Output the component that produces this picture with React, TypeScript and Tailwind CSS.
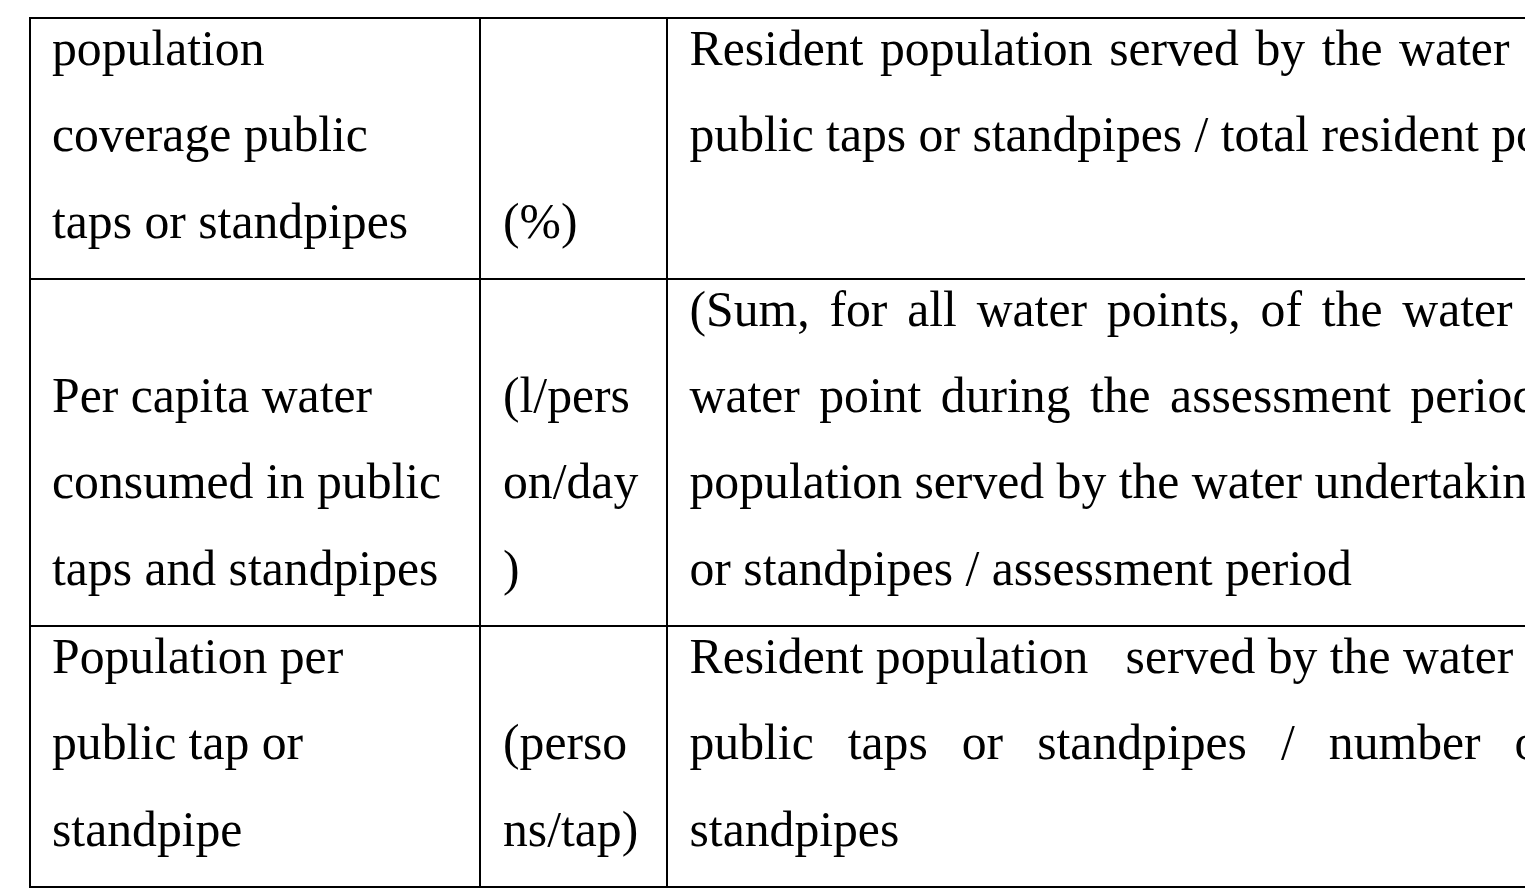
import React from "react";

type Line = { t: string; cls?: string };

const L = (t: string, cls?: string): Line => ({ t, cls });

const rows: { lines: number; c1: Line[]; c2: Line[]; c3: Line[] }[] = [
  {
    lines: 3,
    c1: [L("population"), L("coverage public"), L("taps or standpipes")],
    c2: [L(""), L(""), L("(%)")],
    c3: [
      L("Resident population served by the water undertaking", "[word-spacing:4.2px]"),
      L("public taps or standpipes / total resident population"),
      L(""),
    ],
  },
  {
    lines: 4,
    c1: [L(""), L("Per capita water"), L("consumed in public"), L("taps and standpipes")],
    c2: [L(""), L("(l/pers"), L("on/day"), L(")")],
    c3: [
      L("(Sum, for all water points, of the water", "[word-spacing:7.4px]"),
      L("water point during the assessment period", "[word-spacing:7px]"),
      L("population served by the water undertaking"),
      L("or standpipes / assessment period"),
    ],
  },
  {
    lines: 3,
    c1: [L("Population per"), L("public tap or"), L("standpipe")],
    c2: [L(""), L("(perso"), L("ns/tap)")],
    c3: [
      L("Resident population   served by the water"),
      L("public taps or standpipes / number of", "[word-spacing:21.6px]"),
      L("standpipes"),
    ],
  },
];

function Cell({ lines, pad }: { lines: Line[]; pad: string }) {
  return (
    <div className={`border-r-2 border-b-2 border-black ${pad}`}>
      {lines.map((l, i) => (
        <div
          key={i}
          className={`h-[86.3px] leading-[60px] whitespace-pre ${l.cls ?? ""}`}
        >
          {l.t === "" ? "\u00a0" : l.t}
        </div>
      ))}
    </div>
  );
}

export default function App() {
  return (
    <div className="w-[1525px] h-[890px] overflow-hidden bg-white text-black font-['Liberation_Serif','Times_New_Roman',serif] text-[49.7px]">
      <div className="ml-[29px] mt-[17px] w-max border-t-2 border-l-2 border-black">
        {rows.map((r, i) => (
          <div key={i} className="grid grid-cols-[450px_187px_1100px]">
            <Cell lines={r.c1} pad="pl-[21px]" />
            <Cell lines={r.c2} pad="pl-[22px]" />
            <Cell lines={r.c3} pad="pl-[21.5px]" />
          </div>
        ))}
      </div>
    </div>
  );
}
